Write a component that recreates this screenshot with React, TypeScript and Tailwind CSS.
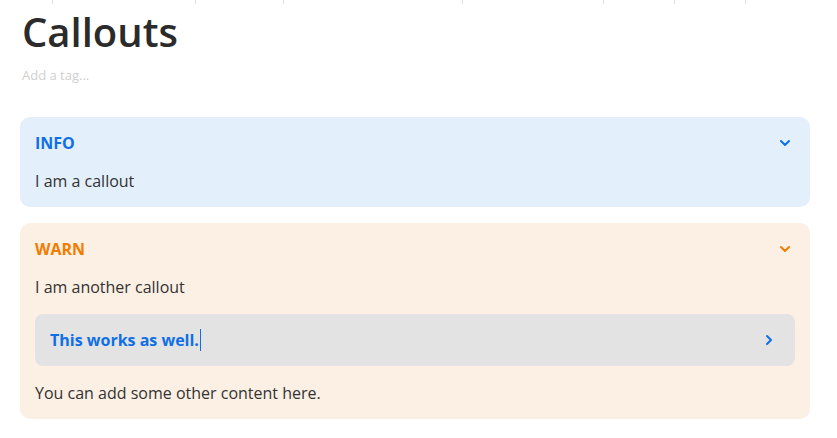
import { ChevronDown, ChevronRight } from "lucide-react";

const ticks = [52, 195, 283, 462, 603, 674, 745];

export default function App() {
  return (
    <div className="relative min-h-[438px] bg-white text-[#333] font-['Open_Sans',sans-serif]">
      {/* bottoms of table borders scrolled off above */}
      {ticks.map((x) => (
        <div key={x} className="absolute top-0 h-[4px] w-px bg-[#ddd]" style={{ left: x }} />
      ))}

      <div className="pl-5 pr-[27px] pt-[6px]">
        <h1 className="pl-[2px] text-[40px] font-semibold leading-[52px] text-[#2b2b2b]">Callouts</h1>
        <div className="mt-[8px] pl-[2px] text-[13px] leading-[18px] text-[#cfcfcf]">Add a tag...</div>

        <div className="mt-[33px] rounded-[10px] bg-[#e4effc] px-[15px] pb-[14px] pt-[14px]">
          <div className="flex h-[24px] items-center justify-between">
            <span className="text-[16px] font-bold text-[#0f6fe6]">INFO</span>
            <ChevronDown className="mr-[2px] h-4 w-4 text-[#0f6fe6]" strokeWidth={3} />
          </div>
          <p className="mt-[14px] text-[16px] leading-[24px]">I am a callout</p>
        </div>

        <div className="mt-[16px] rounded-[10px] bg-[#fcefe3] px-[15px] pb-[14px] pt-[14px]">
          <div className="flex h-[24px] items-center justify-between">
            <span className="text-[16px] font-bold text-[#f07d00]">WARN</span>
            <ChevronDown className="mr-[2px] h-4 w-4 text-[#f07d00]" strokeWidth={3} />
          </div>
          <p className="mt-[14px] text-[16px] leading-[24px]">I am another callout</p>

          <div className="mt-[15px] flex h-[52px] items-center justify-between rounded-[8px] bg-[#e3e3e3] pl-[15px] pr-[18px]">
            <div className="flex items-center text-[16px] font-bold leading-[24px] text-[#0f6fe6]">
              This works as well.
              <span className="ml-[1px] h-[22px] w-px bg-[#0f6fe6]" />
            </div>
            <ChevronRight className="h-4 w-4 text-[#0f6fe6]" strokeWidth={3} />
          </div>

          <p className="mt-[15px] text-[16px] leading-[24px]">You can add some other content here.</p>
        </div>
      </div>
    </div>
  );
}
